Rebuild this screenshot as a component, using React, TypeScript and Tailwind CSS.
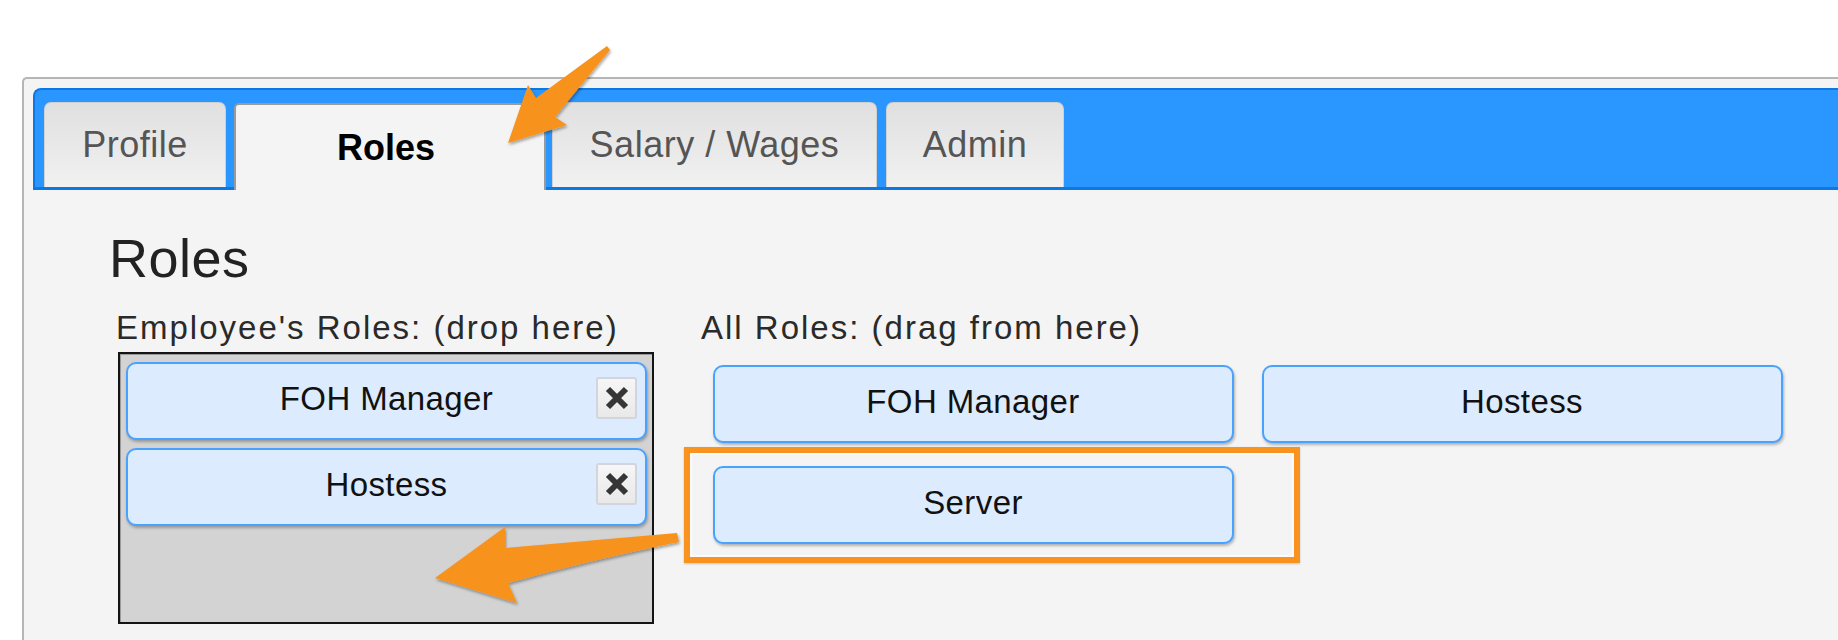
import React from "react";

const FONT = "[font-family:'Liberation_Sans',Arial,sans-serif]";

function XIcon() {
  return (
    <svg width="24" height="24" viewBox="0 0 24 24">
      <path d="M3 3 L21 21 M21 3 L3 21" stroke="#363636" strokeWidth="6" strokeLinecap="butt" />
    </svg>
  );
}

function RoleItem({ label, removable }: { label: string; removable?: boolean }) {
  return (
    <div className="relative flex h-[78px] w-[521px] items-center justify-center rounded-[10px] border-2 border-[#4aa2ff] bg-[#dcebfd] pb-[6px] shadow-[1px_2px_3px_rgba(0,0,0,0.28)]">
      <span className="text-[33px] leading-none tracking-[0.4px] text-[#111]">{label}</span>
      {removable && (
        <div className="absolute right-[8px] top-[13px] flex h-[42px] w-[41px] items-center justify-center rounded-[3px] border-2 border-[#d2d6dc] bg-gradient-to-b from-[#f6f6f6] to-[#e9e9e9]">
          <XIcon />
        </div>
      )}
    </div>
  );
}

function Tab({ label, className }: { label: string; className: string }) {
  return (
    <div
      className={
        "flex h-[85px] items-center justify-center rounded-t-[7px] border border-b-0 border-[#d0d0d0] bg-gradient-to-b from-[#e0e0e0] to-[#f1f1f1] text-[36px] leading-none tracking-[0.5px] text-[#555] " +
        className
      }
    >
      {label}
    </div>
  );
}

export default function App() {
  return (
    <div className={"relative h-[640px] w-[1838px] overflow-hidden bg-white " + FONT}>
      <div className="ml-[22px] mt-[77px] flex h-[563px] w-[1830px] flex-col rounded-tl-[5px] border-l-2 border-t-2 border-[#b5b5b5] bg-[#f4f4f4] pl-[9px] pt-[9px]">
        {/* Tab bar */}
        <div className="flex h-[102px] items-end rounded-tl-[8px] border-b-[3px] border-l-2 border-t-2 border-[#0b78e3] bg-[#2a96ff] pl-[9px]">
          <Tab label="Profile" className="w-[182px]" />
          <div className="relative z-10 mb-[-3px] ml-[8px] flex h-[87px] w-[312px] items-center justify-center rounded-t-[5px] border-2 border-b-0 border-[#9a9a9a] bg-[#f4f4f4] pr-[8px] text-[36px] font-bold leading-none text-black">
            Roles
          </div>
          <Tab label="Salary / Wages" className="ml-[6px] w-[325px]" />
          <Tab label="Admin" className="ml-[9px] w-[178px]" />
        </div>

        {/* Content */}
        <div className="flex-1 pl-[76px]">
          <h1 className="mt-[41px] text-[54px] font-normal leading-none tracking-[0.5px] text-[#222]">Roles</h1>
          <div className="ml-[7px] mt-[26px] flex">
            <div className="w-[538px]">
              <div className="text-[33px] leading-none tracking-[2px] text-[#2a2a2a]">Employee's Roles: (drop here)</div>
              <div className="ml-[2px] mt-[8px] flex h-[272px] w-[536px] flex-col gap-[8px] border-2 border-[#141414] bg-[#d3d3d3] pl-[6px] pt-[8px] shadow-[inset_1px_1px_0_#9a9a9a]">
                <RoleItem label="FOH Manager" removable />
                <RoleItem label="Hostess" removable />
              </div>
            </div>
            <div className="ml-[47px]">
              <div className="text-[33px] leading-none tracking-[2px] text-[#2a2a2a]">All Roles: (drag from here)</div>
              <div className="ml-[11.5px] mt-[21px] grid grid-cols-[521px_521px] gap-x-[28px] gap-y-[23px]">
                <RoleItem label="FOH Manager" />
                <RoleItem label="Hostess" />
                <RoleItem label="Server" />
              </div>
            </div>
          </div>
        </div>
      </div>

      {/* Annotation: highlight rectangle */}
      <div className="pointer-events-none absolute left-[684px] top-[447px] z-20 h-[116px] w-[616px] border-[6px] border-[#f7931e] shadow-[0_1px_2px_rgba(0,0,0,0.2),inset_0_0_0_2px_rgba(255,255,255,0.6)]" />

      {/* Annotation: arrows */}
      <svg className="pointer-events-none absolute left-0 top-0 z-30" width="1838" height="640" viewBox="0 0 1838 640">
        <defs>
          <filter id="sh" x="-20%" y="-20%" width="140%" height="140%">
            <feDropShadow dx="1" dy="2" stdDeviation="1.5" floodColor="#000" floodOpacity="0.35" />
          </filter>
        </defs>
        <path
          d="M607 46 L536 98 L528 85 L508 143 L567 125 L555 117 L610 50 Z"
          fill="#f7931e"
          filter="url(#sh)"
        />
        <path
          d="M677 533 L505 548 L505 527 L435 578 L517 603 L508 583 Q590 560 679 542 Z"
          fill="#f7931e"
          filter="url(#sh)"
        />
      </svg>
    </div>
  );
}
